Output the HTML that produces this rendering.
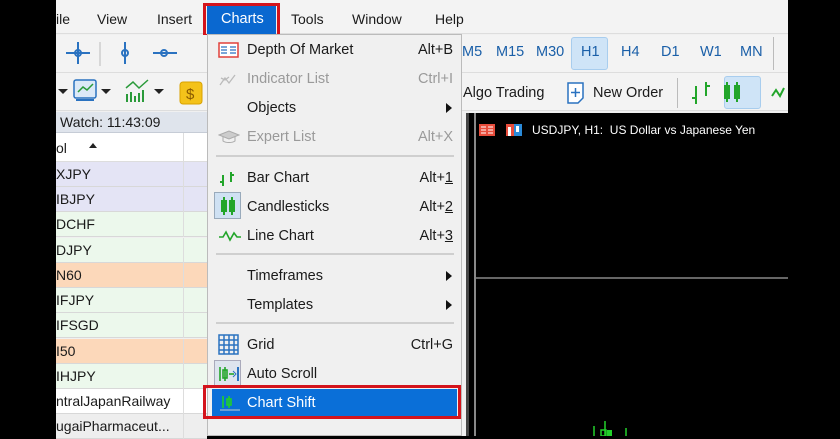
<!DOCTYPE html>
<html><head><meta charset="utf-8"><style>
*{margin:0;padding:0;box-sizing:border-box}
body{width:840px;height:436px;overflow:hidden;background:#000;font-family:"Liberation Sans",sans-serif;font-size:14px;color:#1a1a1a;position:relative}
.a{position:absolute}
.app{left:56px;top:0;width:732px;height:436px;background:#f0f0f0}
.mb span{position:absolute;top:11px}
.tf{position:absolute;top:44px;color:#1a5fa8;font-size:14.5px}
.row{position:absolute;left:56px;width:151px;height:25px;border-bottom:1px solid #d8d8d8}
.row span{position:absolute;left:0;top:4px}
.row i{position:absolute;left:127px;top:0;width:1px;height:25px;background:#ddd}
.menu{left:207px;top:34px;width:255px;height:402px;background:#f0f0f0;border:1px solid #bbb}
.it{position:absolute;left:39px;font-size:14.5px}
.sc{position:absolute;right:8px;font-size:14.5px}
.dis{color:#9a9a9a}
.sep{position:absolute;left:8px;width:238px;height:2px;background:#cfcfcf}
.arr{position:absolute;left:238px;width:0;height:0;border-top:5px solid transparent;border-bottom:5px solid transparent;border-left:6px solid #111}
</style></head><body>
<div class="a app"></div>
<!-- menubar -->
<div class="a mb" style="left:56px;top:0;width:732px;height:34px;background:#f3f3f3;border-bottom:1px solid #ddd">
<span style="left:0">ile</span><span style="left:41px">View</span><span style="left:101px">Insert</span>
<span style="left:235px">Tools</span><span style="left:296px">Window</span><span style="left:379px">Help</span>
</div>
<div class="a" style="left:203px;top:3px;width:77px;height:34px;border:3px solid #d4141c"></div>
<div class="a" style="left:207px;top:6px;width:69px;height:28px;background:#0a68d0;color:#fff;padding:5px 0 0 14px;font-size:14.5px">Charts</div>
<!-- toolbar 1 -->
<div class="a" style="left:56px;top:35px;width:732px;height:38px;background:#f3f3f3;border-bottom:1px solid #ddd"></div>
<svg class="a" style="left:60px;top:38px" width="150" height="32"><g stroke="#2a72c0" stroke-width="2" fill="none"><path d="M6 15h24M18 4v22"/><circle cx="18" cy="15" r="3"/><path d="M65 4v22"/><circle cx="65" cy="15" r="3"/><path d="M93 15h24"/><circle cx="104" cy="15" r="3"/></g><path d="M40 4v24" stroke="#bbb"/></svg>
<div class="a" style="left:571px;top:37px;width:37px;height:33px;background:#cfe4f7;border:1px solid #a8cdee;border-radius:3px"></div>
<span class="tf" style="left:462px">M5</span><span class="tf" style="left:496px">M15</span><span class="tf" style="left:536px">M30</span><span class="tf" style="left:581px">H1</span><span class="tf" style="left:621px">H4</span><span class="tf" style="left:661px">D1</span><span class="tf" style="left:700px">W1</span><span class="tf" style="left:740px">MN</span>
<div class="a" style="left:773px;top:37px;width:1px;height:33px;background:#bbb"></div>
<!-- toolbar 2 -->
<div class="a" style="left:56px;top:73px;width:732px;height:38px;background:#f3f3f3;border-bottom:1px solid #ddd"></div>
<svg class="a" style="left:56px;top:76px" width="150" height="32"><path d="M2 13l5 5 5-5z" fill="#222"/><rect x="18" y="4" width="22" height="18" rx="2" fill="#dce9f7" stroke="#2a72c0" stroke-width="1.5"/><path d="M22 16l5-5 4 3 6-6" stroke="#2a9a3a" fill="none" stroke-width="1.5"/><path d="M20 24h18" stroke="#2a72c0" stroke-width="2"/><path d="M45 13l5 5 5-5z" fill="#222"/><path d="M70 12l7-6 6 6 9-8" stroke="#2a9a3a" fill="none" stroke-width="1.5"/><path d="M71 26v-8M75 26v-10M79 26v-6M83 26v-9M87 26v-12" stroke="#2a9a3a" stroke-width="2"/><path d="M98 13l5 5 5-5z" fill="#222"/><rect x="124" y="6" width="22" height="22" rx="3" fill="#f4c21a" stroke="#d8a200"/><text x="130" y="23" font-size="15" fill="#8a5a00" font-family="Liberation Sans">$</text></svg>
<span class="a" style="left:463px;top:85px;font-size:14.5px">Algo Trading</span>
<svg class="a" style="left:566px;top:81px" width="20" height="24"><path d="M2 2h15v15l-5 5H2z" fill="#fff" stroke="#2a72c0" stroke-width="1.5"/><path d="M9.5 7v9M5 11.5h9" stroke="#2a72c0" stroke-width="1.5"/></svg>
<span class="a" style="left:593px;top:85px;font-size:14.5px">New Order</span>
<div class="a" style="left:677px;top:78px;width:1px;height:30px;background:#bbb"></div>
<div class="a" style="left:724px;top:76px;width:37px;height:33px;background:#cfe4f7;border:1px solid #a8cdee;border-radius:3px"></div>
<svg class="a" style="left:688px;top:78px" width="100" height="30"><g stroke="#22a52a" stroke-width="2" fill="none"><path d="M8 8v18M4 20h4M18 4v14M18 8h4"/><rect x="37" y="8" width="4" height="12"/><path d="M39 4v20M49 4v20"/><rect x="47" y="8" width="4" height="12"/><path d="M84 18l4-6 4 6 4-8"/></g></svg>
<!-- market watch -->
<div class="a" style="left:56px;top:112px;width:151px;height:21px;background:#dfe4ec;border-bottom:1px solid #c6ccd6;padding:2px 0 0 4px">Watch: 11:43:09</div>
<div class="a" style="left:56px;top:133px;width:151px;height:29px;background:#fff;border-bottom:1px solid #ddd"><span class="a" style="left:0;top:7px">ol</span><span class="a" style="left:33px;top:10px;border-left:4px solid transparent;border-right:4px solid transparent;border-bottom:5px solid #222"></span><i class="a" style="left:127px;top:0;width:1px;height:29px;background:#ddd"></i></div>
<div class="row" style="top:162px;background:#e4e4f5"><span>XJPY</span><i></i></div>
<div class="row" style="top:187px;background:#e4e4f5"><span>IBJPY</span><i></i></div>
<div class="row" style="top:212px;background:#ecf8ec"><span>DCHF</span><i></i></div>
<div class="row" style="top:238px;background:#ecf8ec"><span>DJPY</span><i></i></div>
<div class="row" style="top:263px;background:#fcd8ba"><span>N60</span><i></i></div>
<div class="row" style="top:288px;background:#ecf8ec"><span>IFJPY</span><i></i></div>
<div class="row" style="top:313px;background:#ecf8ec"><span>IFSGD</span><i></i></div>
<div class="row" style="top:339px;background:#fcd8ba"><span>I50</span><i></i></div>
<div class="row" style="top:364px;background:#ecf8ec"><span>IHJPY</span><i></i></div>
<div class="row" style="top:389px;background:#fff"><span>ntralJapanRailway</span><i></i></div>
<div class="row" style="top:414px;background:#eeeeee"><span>ugaiPharmaceut...</span><i></i></div>
<!-- chart -->
<div class="a" style="left:466px;top:113px;width:322px;height:323px;background:#000;border-left:3px solid #444"></div>
<div class="a" style="left:474px;top:113px;width:2px;height:323px;background:#888"></div>
<div class="a" style="left:476px;top:277px;width:312px;height:2px;background:#666"></div>
<svg class="a" style="left:478px;top:122px" width="45" height="16"><rect x="1" y="2" width="16" height="12" fill="#e84d3c"/><path d="M3 5h5M10 5h5M3 8h5M10 8h5M3 11h5M10 11h5" stroke="#fff"/><rect x="28" y="2" width="16" height="12" fill="#e84d3c"/><rect x="36" y="2" width="8" height="12" fill="#2a8ad8"/><rect x="30" y="5" width="3" height="9" fill="#fff"/><rect x="38" y="4" width="3" height="6" fill="#fff"/></svg>
<span class="a" style="left:532px;top:123px;color:#fff;font-size:12px">USDJPY, H1:&nbsp; US Dollar vs Japanese Yen</span>
<svg class="a" style="left:590px;top:418px" width="50" height="18"><g stroke="#22d02a" stroke-width="1.5" fill="none"><path d="M4 8v10M15 3v15M36 10v8"/><rect x="11" y="12" width="5" height="6"/></g><rect x="17" y="12" width="5" height="6" fill="#22d02a"/></svg>
<!-- menu -->
<div class="a menu">
<svg class="a" style="left:10px;top:7px" width="22" height="16"><rect x="1" y="1" width="19" height="14" fill="#fff" stroke="#e0413a" stroke-width="1.5"/><path d="M3 5h6M12 5h6M3 8h6M12 8h6M3 11h6M12 11h6" stroke="#2a72c0" stroke-width="1.3"/></svg>
<span class="it" style="top:7px">Depth Of Market</span><span class="sc" style="top:7px">Alt+B</span>
<svg class="a" style="left:10px;top:37px" width="22" height="16"><path d="M2 13l5-7 4 5 6-8M3 6l4 2 4-3" stroke="#bbb" fill="none" stroke-width="1.3"/></svg>
<span class="it dis" style="top:36px">Indicator List</span><span class="sc dis" style="top:36px">Ctrl+I</span>
<span class="it" style="top:65px">Objects</span><div class="arr" style="top:68px"></div>
<svg class="a" style="left:10px;top:94px" width="22" height="16"><path d="M1 6l10-4 10 4-10 4z" fill="#ccc" stroke="#aaa"/><path d="M5 8v4c3 2 9 2 12 0V8" fill="none" stroke="#aaa"/></svg>
<span class="it dis" style="top:94px">Expert List</span><span class="sc dis" style="top:94px">Alt+X</span>
<div class="sep" style="top:120px"></div>
<svg class="a" style="left:10px;top:134px" width="22" height="18"><g stroke="#22a52a" stroke-width="2" fill="none"><path d="M5 6v11M2 13h3M13 3v10M13 6h3"/></g></svg>
<span class="it" style="top:135px">Bar Chart</span><span class="sc" style="top:135px">Alt+<u>1</u></span>
<div class="a" style="left:6px;top:157px;width:27px;height:27px;background:#cfe1f3;border:1px solid #9ab"></div>
<svg class="a" style="left:10px;top:161px" width="22" height="20"><g stroke="#22a52a" stroke-width="2" fill="none"><path d="M6 1v18M14 1v18"/><rect x="4" y="5" width="4" height="10"/><rect x="12" y="5" width="4" height="10"/></g></svg>
<span class="it" style="top:164px">Candlesticks</span><span class="sc" style="top:164px">Alt+<u>2</u></span>
<svg class="a" style="left:10px;top:195px" width="24" height="12"><path d="M1 7h4l3-5 4 8 4-7 3 4h4" stroke="#22a52a" fill="none" stroke-width="1.6"/></svg>
<span class="it" style="top:193px">Line Chart</span><span class="sc" style="top:193px">Alt+<u>3</u></span>
<div class="sep" style="top:218px"></div>
<span class="it" style="top:233px">Timeframes</span><div class="arr" style="top:236px"></div>
<span class="it" style="top:262px">Templates</span><div class="arr" style="top:265px"></div>
<div class="sep" style="top:287px"></div>
<svg class="a" style="left:10px;top:299px" width="22" height="22"><g stroke="#2a72c0" stroke-width="1.5" fill="none"><rect x="1" y="1" width="19" height="19"/><path d="M6 1v19M11 1v19M16 1v19M1 6h19M1 11h19M1 16h19"/></g></svg>
<span class="it" style="top:302px">Grid</span><span class="sc" style="top:302px">Ctrl+G</span>
<div class="a" style="left:6px;top:325px;width:27px;height:26px;background:#dde4ee;border:1px solid #aab"></div>
<svg class="a" style="left:9px;top:330px" width="24" height="18"><g stroke="#22a52a" stroke-width="1.6" fill="none"><path d="M3 2v14M8 2v14"/><rect x="6" y="5" width="4" height="8"/><path d="M12 9h5"/></g><path d="M21 2v14" stroke="#2a72c0" stroke-width="2"/><path d="M16 6l3 3-3 3" stroke="#2a72c0" fill="none"/></svg>
<span class="it" style="top:331px">Auto Scroll</span>
<div class="a" style="left:4px;top:354px;width:245px;height:28px;background:#0a6fd8"></div>
<svg class="a" style="left:10px;top:358px" width="24" height="20"><g stroke="#22d02a" stroke-width="1.6" fill="none"><path d="M5 3v12M11 3v12"/><rect x="9" y="6" width="4" height="6"/></g><path d="M2 17h20" stroke="#ccc"/></svg>
<span class="it" style="top:360px;color:#fff">Chart Shift</span>
</div>
<div class="a" style="left:203px;top:385px;width:258px;height:34px;border:3px solid #d4141c"></div>
</body></html>
